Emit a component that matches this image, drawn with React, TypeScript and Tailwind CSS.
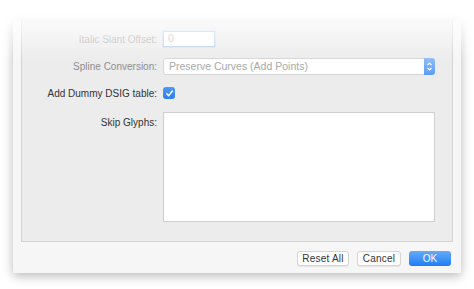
import React from "react";

export default function App() {
  const font = { fontFamily: '"Liberation Sans", Arial, sans-serif' };
  return (
    <div className="relative w-[474px] h-[289px] bg-white overflow-hidden" style={font}>
      <div className="pt-[20px] pl-[13px]">
        <div className="w-[448px] h-[253px] bg-[#f6f6f6] shadow-[0_3px_10px_rgba(0,0,0,0.28)] flex flex-col px-[8px]">
          <div className="h-[222px] bg-[#ececec] border-x border-b border-[#d2d2d2] flex flex-col text-[10px]">
            {/* Row 1 */}
            <div className="flex items-center mt-[11px] h-[16px]">
              <div className="w-[135px] text-right text-[#b0b0b0]">Italic Slant Offset:</div>
              <div className="ml-[6px] w-[52px] h-[16px] bg-white border border-[#b4cdee] shadow-[0_0_0_1px_#d6e4f6] flex items-center pl-[4px] text-[10.5px] text-[#b8b8b8]">0</div>
            </div>
            {/* Row 2 */}
            <div className="flex items-center mt-[11px] h-[17px]">
              <div className="w-[135px] text-right text-[#8c8c8c]">Spline Conversion:</div>
              <div className="ml-[6px] w-[272px] h-[17px] bg-white border border-[#d6d6d6] rounded-[3px] flex items-center justify-between pl-[5px] text-[10.5px] text-[#a8a8a8]">
                <span>Preserve Curves (Add Points)</span>
                <div className="w-[11px] h-[17px] -mr-px rounded-r-[3px] bg-gradient-to-b from-[#8fbdf6] to-[#5e9ef1] flex items-center justify-center">
                  <svg width="7" height="11" viewBox="0 0 7 11">
                    <path d="M1.5 4 L3.5 2 L5.5 4" stroke="white" strokeWidth="1.1" fill="none" />
                    <path d="M1.5 7 L3.5 9 L5.5 7" stroke="white" strokeWidth="1.1" fill="none" />
                  </svg>
                </div>
              </div>
            </div>
            {/* Row 3 */}
            <div className="flex items-center mt-[12px] h-[12px]">
              <div className="w-[135px] text-right text-[#333333]">Add Dummy DSIG table:</div>
              <div className="ml-[6px] w-[12px] h-[12px] rounded-[3px] bg-gradient-to-b from-[#4d9af7] to-[#2a7ef3] flex items-center justify-center">
                <svg width="9" height="9" viewBox="0 0 9 9">
                  <path d="M1.8 4.8 L3.7 6.8 L7.3 2" stroke="white" strokeWidth="1.5" fill="none" strokeLinecap="round" strokeLinejoin="round" />
                </svg>
              </div>
            </div>
            {/* Row 4 */}
            <div className="flex items-start mt-[13px]">
              <div className="w-[135px] text-right text-[#333333] mt-[3px]">Skip Glyphs:</div>
              <div className="ml-[6px] w-[272px] h-[110px] bg-white border border-[#cfcfcf]" />
            </div>
          </div>
          <div className="flex justify-end items-center gap-[8px] mt-[9px] pr-[2px] text-[10px]">
            <div className="w-[52px] h-[15px] bg-white border border-[#d4d4d4] rounded-[3px] shadow-[0_1px_0_rgba(0,0,0,0.06)] flex items-center justify-center text-[#333] tracking-[0.2px]">Reset All</div>
            <div className="w-[44px] h-[15px] bg-white border border-[#d4d4d4] rounded-[3px] shadow-[0_1px_0_rgba(0,0,0,0.06)] flex items-center justify-center text-[#333] tracking-[0.2px]">Cancel</div>
            <div className="w-[42px] h-[15px] rounded-[3px] bg-gradient-to-b from-[#63aaf9] to-[#1b7ef5] flex items-center justify-center text-white">OK</div>
          </div>
        </div>
      </div>
      <div className="absolute left-0 top-0 w-full h-[60px] bg-gradient-to-b from-white via-[rgba(255,255,255,0.6)] to-[rgba(255,255,255,0)] pointer-events-none" />
    </div>
  );
}
